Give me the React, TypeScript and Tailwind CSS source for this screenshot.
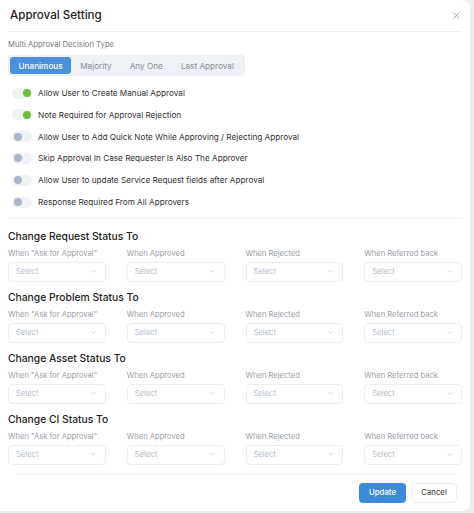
import React from 'react';
import { ChevronDown, X } from 'lucide-react';

const toggles = [
    { label: 'Allow User to Create Manual Approval', on: true },
    { label: 'Note Required for Approval Rejection', on: true },
    { label: 'Allow User to Add Quick Note While Approving / Rejecting Approval', on: false },
    { label: 'Skip Approval In Case Requester Is Also The Approver', on: false },
    { label: 'Allow User to update Service Request fields after Approval', on: false },
    { label: 'Response Required From All Approvers', on: false },
];

const sections = ['Change Request Status To', 'Change Problem Status To', 'Change Asset Status To', 'Change CI Status To'];
const fields = ['When "Ask for Approval"', 'When Approved', 'When Rejected', 'When Referred back'];
const tabs = ['Unanimous', 'Majority', 'Any One', 'Last Approval'];

const Toggle: React.FC<{ on: boolean }> = ({ on }) => (
    <span className={`flex items-center w-[20px] h-[11px] rounded-full bg-[#f1f2f4] px-[1.5px] ${on ? 'justify-end' : 'justify-start'}`}>
        <span className={`w-[8px] h-[8px] rounded-full ${on ? 'bg-[#6cbd3c]' : 'bg-[#a9b6c8]'}`} />
    </span>
);

const App: React.FC = () => {
    return (
        <div className="w-[474px] h-[513px] bg-[#eeeeee] overflow-hidden" style={{ fontFamily: 'Inter, "Noto Sans", sans-serif' }}>
            <div className="w-[470px] h-[511px] bg-white rounded-r-lg flex flex-col">
                {/* Header */}
                <div className="flex items-center justify-between h-[32px] mx-[8px] pl-[2px] pr-[0px] border-b border-[#eeeff1]">
                    <h1 className="text-[11.6px] font-medium text-[#222]">Approval Setting</h1>
                    <X className="w-[11px] h-[11px] text-[#888]" strokeWidth={1.5} />
                </div>

                <div className="px-[8px]">
                    <div className="pt-[7px] text-[7.7px] text-[#7a7a7a]">Multi Approval Decision Type</div>
                    <div className="mt-[2px] inline-flex items-center h-[21px] p-[2px] rounded bg-[#eef1f5]">
                        {tabs.map((t, i) => (
                            <span
                                key={t}
                                className={`h-full flex items-center rounded-[3px] text-[8.2px] ${i === 0 ? 'bg-[#4a90da] text-white font-medium px-[8.5px]' : 'text-[#8a8f99] px-[9px]'}`}
                            >
                                {t}
                            </span>
                        ))}
                    </div>

                    {/* Toggles */}
                    <div className="flex flex-col pt-[6px] pb-[5px] border-b border-[#eeeff1]">
                        {toggles.map((t) => (
                            <div key={t.label} className="flex items-center h-[21.8px] pl-[4px] gap-[6px]">
                                <Toggle on={t.on} />
                                <span className="text-[8.2px] text-[#333]">{t.label}</span>
                            </div>
                        ))}
                    </div>

                    {/* Status sections */}
                    <div className="flex flex-col pt-[10px] gap-[8px]">
                        {sections.map((s) => (
                            <div key={s}>
                                <h2 className="text-[10.3px] font-medium text-[#222] leading-[14px]">{s}</h2>
                                <div className="grid grid-cols-4 gap-x-[21px] mt-[5px]">
                                    {fields.map((f) => (
                                        <div key={f} className="flex flex-col">
                                            <span className="text-[7.6px] text-[#9a9ea6] leading-[11px]">{f}</span>
                                            <div className="mt-[3px] h-[20px] flex items-center justify-between pl-[7px] pr-[8px] border border-[#eceef1] rounded">
                                                <span className="text-[7.6px] text-[#b3bccb]">Select</span>
                                                <ChevronDown className="w-[7px] h-[7px] text-[#b3bccb]" />
                                            </div>
                                        </div>
                                    ))}
                                </div>
                            </div>
                        ))}
                    </div>
                </div>

                {/* Footer */}
                <div className="mt-auto ml-[16px] mr-[12px] mb-[8px] pt-[8px] border-t border-[#eeeff1] flex justify-end gap-[5px] pr-[1px]">
                    <button className="h-[20px] w-[47px] rounded bg-[#3d8bd8] text-white text-[7.8px] font-medium">Update</button>
                    <button className="h-[20px] w-[46px] rounded border border-[#eceef1] bg-white text-[#333] text-[7.8px]">Cancel</button>
                </div>
            </div>
        </div>
    );
};

export default App;
